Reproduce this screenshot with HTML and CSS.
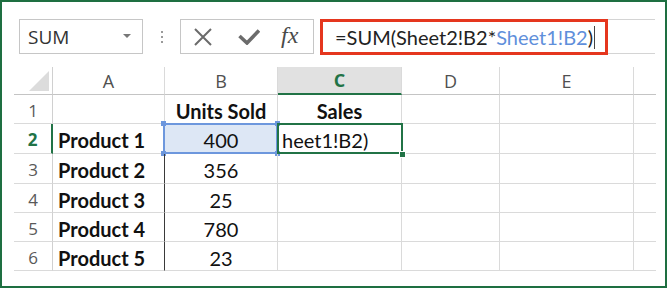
FILE: index.html
```html
<!DOCTYPE html>
<html lang="en">
<head>
    <meta charset="UTF-8">
    <meta name="viewport" content="width=device-width, initial-scale=1.0">
    <title>Sales - Excel</title>
    <link rel="stylesheet" href="styles.css">
</head>
<body>
    <div class="window">
        <div class="formula-row">
            <div class="name-box">
                <span>SUM</span>
                <span class="caret-down"></span>
            </div>
            <div class="grip"><i></i><i></i><i></i></div>
            <div class="fx-buttons">
                <svg class="btn-cancel" width="20" height="18" viewBox="0 0 20 18">
                    <path d="M2 1 L18 17 M18 1 L2 17" stroke="#6b6b6b" stroke-width="2" fill="none"/>
                </svg>
                <svg class="btn-enter" width="22" height="16" viewBox="0 0 22 16">
                    <path d="M1.5 7 L9 14 L21 1.5" stroke="#6b6b6b" stroke-width="3.6" fill="none"/>
                </svg>
                <span class="fx">fx</span>
            </div>
            <div class="formula-bar">
                <div class="formula-edit">=SUM(Sheet2!B2*<span class="ref">Sheet1!B2</span>)<span class="text-cursor"></span></div>
            </div>
        </div>

        <div class="sheet">
            <div class="corner"><span class="corner-tri"></span></div>
            <div class="ch">A</div>
            <div class="ch">B</div>
            <div class="ch active">C</div>
            <div class="ch">D</div>
            <div class="ch">E</div>
            <div class="ch last"></div>

            <div class="rh">1</div>
            <div class="cell"></div>
            <div class="cell bold center">Units Sold</div>
            <div class="cell bold center">Sales</div>
            <div class="cell"></div>
            <div class="cell"></div>
            <div class="cell last"></div>

            <div class="rh active">2</div>
            <div class="cell bold edge">Product 1</div>
            <div class="cell center picked">400<span class="pick-box"><i class="tl"></i><i class="tr"></i><i class="bl"></i><i class="br"></i></span></div>
            <div class="cell editing">heet1!B2)<span class="fill-handle"></span></div>
            <div class="cell"></div>
            <div class="cell"></div>
            <div class="cell last"></div>

            <div class="rh">3</div>
            <div class="cell bold edge">Product 2</div>
            <div class="cell center">356</div>
            <div class="cell"></div>
            <div class="cell"></div>
            <div class="cell"></div>
            <div class="cell last"></div>

            <div class="rh">4</div>
            <div class="cell bold edge">Product 3</div>
            <div class="cell center">25</div>
            <div class="cell"></div>
            <div class="cell"></div>
            <div class="cell"></div>
            <div class="cell last"></div>

            <div class="rh">5</div>
            <div class="cell bold edge">Product 4</div>
            <div class="cell center">780</div>
            <div class="cell"></div>
            <div class="cell"></div>
            <div class="cell"></div>
            <div class="cell last"></div>

            <div class="rh">6</div>
            <div class="cell bold edge">Product 5</div>
            <div class="cell center">23</div>
            <div class="cell"></div>
            <div class="cell"></div>
            <div class="cell"></div>
            <div class="cell last"></div>
        </div>
    </div>
</body>
</html>
```

FILE: styles.css
```css
body {
    margin: 0;
    background: #fff;
}
.window {
    width: 667px;
    height: 288px;
    box-sizing: border-box;
    border: 2px solid #1e6f41;
    background: #fff;
    overflow: hidden;
}

/* formula bar row */
.formula-row {
    display: flex;
    height: 35px;
    margin-top: 17px;
    padding-left: 17px;
}
.name-box {
    width: 124px;
    box-sizing: border-box;
    border: 1px solid #c6c6c6;
    display: flex;
    align-items: center;
    justify-content: space-between;
    padding: 0 11px 0 8px;
    font-family: "Open Sans", sans-serif;
    font-size: 19px;
    color: #333;
}
.caret-down {
    width: 0;
    height: 0;
    border-left: 4px solid transparent;
    border-right: 4px solid transparent;
    border-top: 4px solid #777;
    margin-top: -2px;
}
.grip {
    width: 37px;
    display: flex;
    flex-direction: column;
    align-items: center;
    justify-content: center;
    gap: 3px;
}
.grip i {
    width: 2px;
    height: 2px;
    background: #9a9a9a;
}
.fx-buttons {
    width: 134px;
    box-sizing: border-box;
    border: 1px solid #c6c6c6;
    display: flex;
    align-items: center;
    padding-left: 12px;
}
.btn-enter {
    margin-left: 25px;
}
.fx {
    margin-left: 21px;
    font-family: "Liberation Serif", serif;
    font-style: italic;
    font-size: 24px;
    color: #4a4a4a;
    margin-top: -3px;
}
.formula-bar {
    width: 335px;
    margin-left: 6px;
    box-sizing: border-box;
    border-top: 1px solid #d4d4d4;
    border-bottom: 1px solid #d4d4d4;
}
.formula-edit {
    width: 288px;
    height: 36px;
    margin-top: -1px;
    box-sizing: border-box;
    border: 3px solid #e5361e;
    display: flex;
    align-items: center;
    padding-left: 12px;
    font-family: "Lato", sans-serif;
    font-size: 20px;
    color: #222;
    white-space: pre;
}
.ref {
    color: #5f8fdb;
}
.text-cursor {
    width: 1px;
    height: 23px;
    background: #444;
    margin-left: 1px;
}

/* sheet grid */
.sheet {
    display: grid;
    grid-template-columns: 39px 112px 113px 124px 98px 134px 22px;
    grid-template-rows: 28px 29px 30px 30px 29px 29px 29px;
    margin-top: 13px;
    margin-left: 12px;
    font-family: "Lato", sans-serif;
    font-size: 20px;
    color: #111;
}
.corner {
    border-right: 1px solid #d0d0d0;
    border-bottom: 1px solid #c4c4c4;
    display: flex;
    align-items: flex-end;
    justify-content: flex-end;
    padding: 0 3px 3px 0;
}
.corner-tri {
    width: 20px;
    height: 20px;
    background: #dcdcdc;
    clip-path: polygon(100% 0, 100% 100%, 0 100%);
}
.ch {
    border-right: 1px solid #dadada;
    border-bottom: 1px solid #c4c4c4;
    display: flex;
    align-items: center;
    justify-content: center;
    font-family: "Open Sans", sans-serif;
    font-size: 18px;
    color: #505050;
}
.ch.active {
    background: #e1e1e1;
    border-bottom: 2px solid #217346;
    color: #217346;
    font-weight: 700;
}
.ch.last {
    border-right: none;
}
.rh {
    border-right: 1px solid #d0d0d0;
    border-bottom: 1px solid #dadada;
    display: flex;
    align-items: center;
    justify-content: center;
    padding-top: 2px;
    font-family: "Open Sans", sans-serif;
    font-size: 17px;
    color: #595959;
}
.rh.active {
    border-right: 2px solid #217346;
    color: #217346;
    font-weight: 700;
}
.cell {
    position: relative;
    border-right: 1px solid #dadada;
    border-bottom: 1px solid #dadada;
    display: flex;
    align-items: center;
    padding: 3px 0 0 5px;
    white-space: nowrap;
}
.cell.last {
    border-right: none;
}
.cell.bold {
    font-weight: 700;
}
.cell.center {
    justify-content: center;
    padding-left: 0;
}
.cell.edge {
    border-right: 1px solid #3a3a3a;
}
.cell.picked {
    background: #dde7f5;
}
.pick-box {
    position: absolute;
    top: -1px;
    left: -2px;
    right: -1px;
    bottom: -1px;
    border: 2px solid #6d97dd;
}
.pick-box i {
    position: absolute;
    width: 5px;
    height: 5px;
    background: #6d97dd;
}
.pick-box .tl { top: -4px; left: -4px; }
.pick-box .tr { top: -4px; right: -4px; }
.pick-box .bl { bottom: -4px; left: -4px; }
.pick-box .br { bottom: -4px; right: -4px; }
.cell.editing {
    padding-left: 4px;
}
.cell.editing::after {
    content: "";
    position: absolute;
    top: -1px;
    left: -1px;
    right: -2px;
    bottom: -1px;
    border: 2px solid #217346;
}
.fill-handle {
    position: absolute;
    right: -5px;
    bottom: -5px;
    width: 5px;
    height: 5px;
    background: #217346;
    border: 1px solid #fff;
    z-index: 1;
}
```
